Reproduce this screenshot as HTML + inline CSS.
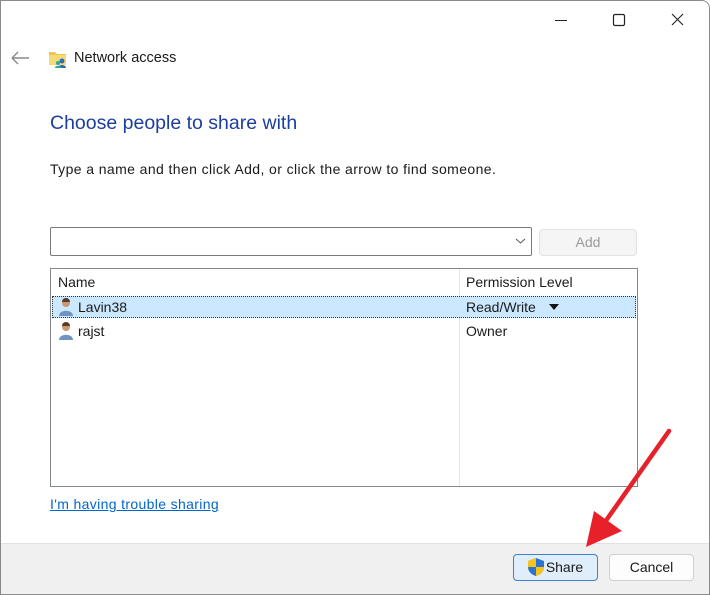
<!DOCTYPE html>
<html><head><meta charset="utf-8"><style>
*{margin:0;padding:0;box-sizing:border-box}
body{width:710px;height:595px;overflow:hidden;background:#fff;font-family:"Liberation Sans",sans-serif;font-size:14px;color:#1a1a1a;position:relative}
.win{position:absolute;left:0;top:0;width:710px;height:595px;background:#fff}
.bd{position:absolute;left:0;top:0;width:710px;height:595px;border:1px solid #8a8a8a;border-radius:0 8px 0 0;pointer-events:none}
.a{position:absolute}
.foot{position:absolute;left:1px;right:1px;top:543px;bottom:1px;background:#f0f0f0;border-top:1px solid #e2e2e2}
.btn{position:absolute;height:27px;border:1px solid #d0d0d0;border-radius:4px;background:#fdfdfd;text-align:center;line-height:25px;font-size:14px}
</style></head><body>
<div class="win">
<svg class="a" style="left:550px;top:10px" width="150" height="22">
<line x1="5" y1="10.5" x2="17" y2="10.5" stroke="#222" stroke-width="1"/>
<rect x="63.5" y="4.5" width="11" height="11" rx="1.5" fill="none" stroke="#222" stroke-width="1.2"/>
<path d="M122 4L133 15M133 4L122 15" stroke="#222" stroke-width="1.1"/>
</svg>
<svg class="a" style="left:10px;top:50px" width="22" height="16"><path d="M2 8H19M2 8L8 2M2 8L8 14" stroke="#888" stroke-width="1.4" fill="none"/></svg>
<svg class="a" style="left:48px;top:49px" width="20" height="20">
<path d="M1 3h6l2 2h9v11H1z" fill="#f1c34f"/><path d="M1 6h17v10H1z" fill="#f8d978"/>
<circle cx="14" cy="12" r="2.5" fill="#2d6db5"/><path d="M10 19c0-4 8-4 8 0z" fill="#2d6db5"/>
<circle cx="10" cy="14" r="2" fill="#2aa89a"/><path d="M7 19c0-3 6-3 6 0z" fill="#2aa89a"/>
</svg>
<div class="a" style="left:74px;top:50px;font-size:14.5px">Network access</div>
<div class="a" style="left:50px;top:112px;font-size:19.5px;color:#1c3f9f">Choose people to share with</div>
<div class="a" style="left:50px;top:161px;font-size:14px;letter-spacing:0.4px">Type a name and then click Add, or click the arrow to find someone.</div>
<div class="a" style="left:50px;top:227px;width:482px;height:29px;border:1px solid #7a7a7a;border-radius:2px"></div>
<svg class="a" style="left:515px;top:237px" width="12" height="8"><path d="M1 2l4.5 4 4.5-4" stroke="#555" fill="none"/></svg>
<div class="btn" style="left:539px;top:229px;width:98px;color:#9a9a9a;background:#f5f5f5;border-color:#e2e2e2">Add</div>
<div class="a" style="left:50px;top:268px;width:588px;height:219px;border:1px solid #828790"></div>
<div class="a" style="left:459px;top:269px;width:1px;height:217px;background:#e5e5e5"></div>
<div class="a" style="left:58px;top:274px">Name</div>
<div class="a" style="left:466px;top:274px">Permission Level</div>
<div class="a" style="left:52px;top:296px;width:584px;height:22px;background:#cce8ff;border:1px dotted #333"></div>
<svg class="a" style="left:58px;top:298px" width="16" height="18"><circle cx="8" cy="5" r="4" fill="#c89a78"/><path d="M4 4a4 4 0 0 1 8 0z" fill="#5a3a22"/><path d="M1 18c0-7 14-7 14 0z" fill="#6e95c2"/></svg>
<div class="a" style="left:78px;top:299px">Lavin38</div>
<div class="a" style="left:466px;top:299px">Read/Write</div>
<svg class="a" style="left:549px;top:304px" width="10" height="6"><path d="M0 0h10L5 6z" fill="#111"/></svg>
<svg class="a" style="left:58px;top:322px" width="16" height="18"><circle cx="8" cy="5" r="4" fill="#c89a78"/><path d="M4 4a4 4 0 0 1 8 0z" fill="#5a3a22"/><path d="M1 18c0-7 14-7 14 0z" fill="#6e95c2"/></svg>
<div class="a" style="left:78px;top:323px">rajst</div>
<div class="a" style="left:466px;top:323px">Owner</div>
<div class="a" style="left:50px;top:496px;color:#0066cc;text-decoration:underline;letter-spacing:0.35px">I'm having trouble sharing</div>
<div class="foot"></div>
<div class="btn" style="left:513px;top:554px;width:85px;background:#e0eefb;border-color:#3c83d0;padding-left:18px">Share</div>
<svg class="a" style="left:527px;top:557px" width="18" height="20"><path d="M9 1L1 4v6c0 5 4 8 8 9 4-1 8-4 8-9V4z" fill="#2a74d0"/><path d="M9 1v9H1V4zM9 10h8c0 5-4 8-8 9z" fill="#f7c21b"/></svg>
<div class="btn" style="left:609px;top:554px;width:85px">Cancel</div>
<svg class="a" style="left:0;top:0" width="710" height="595"><line x1="669" y1="431" x2="605" y2="522" stroke="#e8202a" stroke-width="4.5" stroke-linecap="round"/><path d="M586 547L594 511 622 531z" fill="#e8202a"/></svg>
</div>
<div class="bd"></div>
</body></html>
